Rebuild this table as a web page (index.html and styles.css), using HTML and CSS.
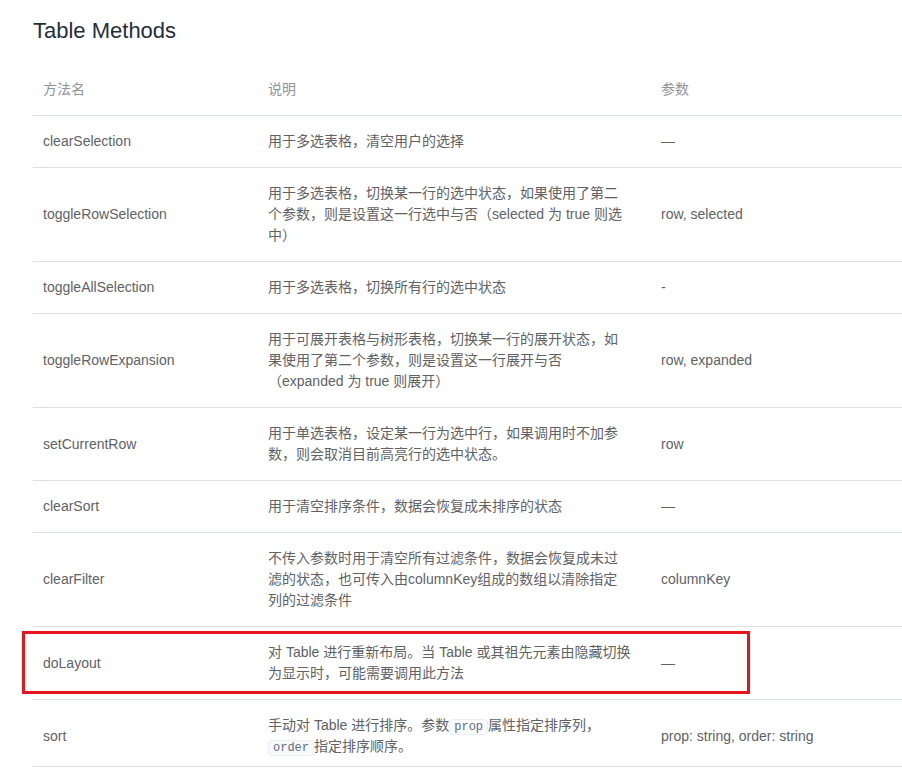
FILE: index.html
```html
<!DOCTYPE html>
<html lang="zh-CN">
<head>
<meta charset="utf-8">
<title>Table Methods</title>
<link rel="stylesheet" href="styles.css">
</head>
<body>
<div class="page">
  <h3 class="title">Table Methods</h3>
  <table class="doc-table">
    <colgroup>
      <col class="col-name">
      <col class="col-desc">
      <col class="col-param">
    </colgroup>
    <thead>
      <tr><th>方法名</th><th>说明</th><th>参数</th></tr>
    </thead>
    <tbody>
      <tr><td>clearSelection</td><td>用于多选表格，清空用户的选择</td><td>—</td></tr>
      <tr><td>toggleRowSelection</td><td>用于多选表格，切换某一行的选中状态，如果使用了第二个参数，则是设置这一行选中与否（selected 为 true 则选中）</td><td>row, selected</td></tr>
      <tr><td>toggleAllSelection</td><td>用于多选表格，切换所有行的选中状态</td><td>-</td></tr>
      <tr><td>toggleRowExpansion</td><td>用于可展开表格与树形表格，切换某一行的展开状态，如果使用了第二个参数，则是设置这一行展开与否（expanded 为 true 则展开）</td><td>row, expanded</td></tr>
      <tr><td>setCurrentRow</td><td>用于单选表格，设定某一行为选中行，如果调用时不加参数，则会取消目前高亮行的选中状态。</td><td>row</td></tr>
      <tr><td>clearSort</td><td>用于清空排序条件，数据会恢复成未排序的状态</td><td>—</td></tr>
      <tr><td>clearFilter</td><td>不传入参数时用于清空所有过滤条件，数据会恢复成未过滤的状态，也可传入由columnKey组成的数组以清除指定列的过滤条件</td><td>columnKey</td></tr>
      <tr><td>doLayout</td><td>对 Table 进行重新布局。当 Table 或其祖先元素由隐藏切换为显示时，可能需要调用此方法</td><td>—</td></tr>
      <tr class="last"><td>sort</td><td>手动对 Table 进行排序。参数<code>prop</code>属性指定排序列，<code>order</code>指定排序顺序。</td><td>prop: string, order: string</td></tr>
    </tbody>
  </table>
  <div class="highlight"></div>
</div>
</body>
</html>
```

FILE: styles.css
```css
html, body {
  margin: 0;
  padding: 0;
  background: #fff;
}

.page {
  position: relative;
  padding: 18px 0 0 33px;
  font-family: "Liberation Sans", Arial, "Noto Sans CJK SC", sans-serif;
}

.title {
  margin: 0 0 20px;
  font-size: 22px;
  line-height: 26px;
  font-weight: 400;
  color: #1f2f3d;
}

.doc-table {
  width: 100%;
  border-collapse: collapse;
  table-layout: fixed;
  font-size: 14px;
  line-height: 21px;
  background: #fff;
}

.col-name { width: 220px; }
.col-desc { width: 393px; }

.doc-table th,
.doc-table td {
  border-bottom: 1px solid #dcdfe6;
  padding: 15px;
  vertical-align: middle;
  text-align: left;
}

.doc-table th:first-child,
.doc-table td:first-child {
  padding-left: 10px;
}

.doc-table th {
  color: #909399;
  font-weight: 400;
  white-space: nowrap;
}

.doc-table td {
  color: #606266;
}

.doc-table tr.last td {
  padding-bottom: 9px;
}

.doc-table code {
  font-family: "Liberation Mono", "Courier New", monospace;
  font-size: 12px;
  line-height: 12px;
  color: #5e6d82;
  background: #f9fafc;
  border: 1px solid #eaeefb;
  border-radius: 4px;
  padding: 0 4px;
}

.highlight {
  position: absolute;
  left: 22px;
  top: 631px;
  width: 728px;
  height: 63px;
  box-sizing: border-box;
  border: 3px solid #e5141f;
  pointer-events: none;
}
```
